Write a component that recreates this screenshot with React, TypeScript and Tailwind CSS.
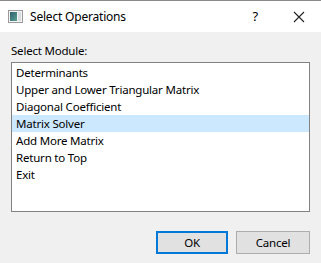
import React from "react";

const items = [
  "Determinants",
  "Upper and Lower Triangular Matrix",
  "Diagonal Coefficient",
  "Matrix Solver",
  "Add More Matrix",
  "Return to Top",
  "Exit",
];

export default function App() {
  return (
    <div
      className="w-[321px] h-[263px] bg-[#f0f0f0] flex flex-col border-t border-[#8a8a8a] text-[11.5px] tracking-[-0.2px] text-black overflow-hidden"
      style={{ fontFamily: '"Noto Sans", "Liberation Sans", sans-serif' }}
    >
      <div className="h-[31px] bg-white flex items-center shrink-0">
        <svg width="15" height="13" viewBox="0 0 15 13" className="ml-[8px]">
          <rect x="0.5" y="0.5" width="14" height="12" fill="#f4f4f4" stroke="#9a9a9a" />
          <defs>
            <linearGradient id="g" x1="0" y1="0" x2="1" y2="1">
              <stop offset="0" stopColor="#2f5f6f" />
              <stop offset="1" stopColor="#5aa090" />
            </linearGradient>
          </defs>
          <rect x="2" y="2" width="7" height="9" fill="url(#g)" />
          <rect x="10" y="2" width="3" height="9" fill="#d8dde0" />
        </svg>
        <span className="ml-[7px] text-[12px]">Select Operations</span>
        <span className="ml-auto mr-[35px] text-[13px]">?</span>
        <svg width="12" height="12" viewBox="0 0 12 12" className="mr-[16px]">
          <path d="M1 1 L11 11 M11 1 L1 11" stroke="#222" strokeWidth="1.1" />
        </svg>
      </div>
      <div className="flex flex-col px-[11px] pt-[11px]">
        <div className="leading-[16px]">Select Module:</div>
        <div className="mt-[3px] h-[150px] bg-white border border-[#828282] pt-[1px] flex flex-col">
          {items.map((it, i) => (
            <div
              key={it}
              className={`h-[17px] leading-[17px] pl-[4px] ${i === 3 ? "bg-[#cce8ff]" : ""}`}
            >
              {it}
            </div>
          ))}
        </div>
        <div className="flex justify-end gap-[8px] mt-[19px]">
          <div className="w-[72px] h-[23px] bg-[#e1e1e1] border-2 border-[#0078d7] flex items-center justify-center">
            OK
          </div>
          <div className="w-[74px] h-[23px] bg-[#e1e1e1] border border-[#adadad] flex items-center justify-center">
            Cancel
          </div>
        </div>
      </div>
    </div>
  );
}
